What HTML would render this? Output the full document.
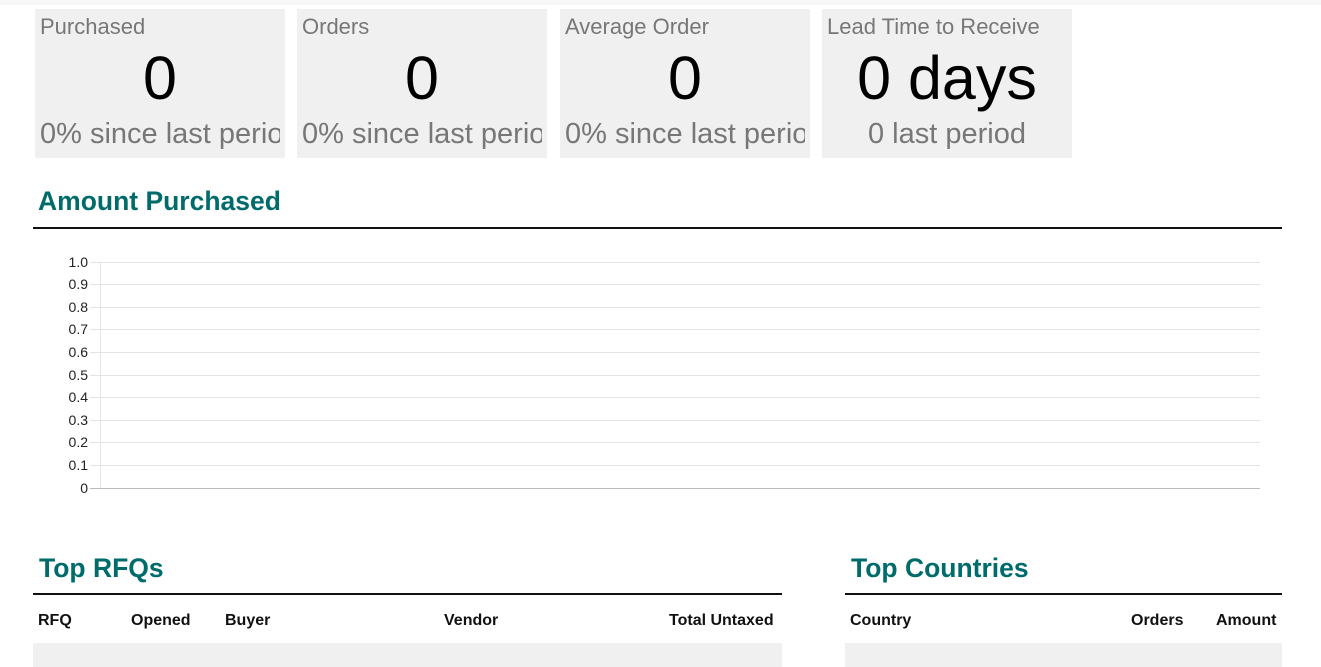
<!DOCTYPE html>
<html><head><meta charset="utf-8"><style>
*{margin:0;padding:0;box-sizing:border-box}
body{width:1321px;height:667px;background:#fff;font-family:"Liberation Sans",Arial,sans-serif;position:relative;overflow:hidden}
.top{position:absolute;left:0;top:0;width:1321px;height:5px;background:#f7f7f7}
.card{position:absolute;top:9px;width:250px;height:149px;background:#f0f0f0;overflow:hidden;text-align:center;white-space:nowrap}
.card .t{position:absolute;left:5px;top:5px;font-size:22px;color:#777;text-align:left}
.card .n{position:absolute;left:0;right:0;top:38px;font-size:61px;color:#000;line-height:62px}
.card .s{position:absolute;left:5px;right:5px;top:108px;font-size:29px;color:#777;overflow:hidden;line-height:34px}
h2{position:absolute;color:#006b6b;font-size:26.5px;font-weight:bold}
.line{position:absolute;height:2px;background:#111}
.yl{position:absolute;width:50px;text-align:right;left:38px;font-size:14px;color:#222}
.g{position:absolute;left:90px;width:1170px;height:1px;background:#e4e4e4}
.th{position:absolute;top:612px;font-size:16px;font-weight:bold;color:#111}
.row{position:absolute;top:643px;height:24px;background:#f0f0f0}
</style></head><body>
<div class="top"></div>
<div class="card" style="left:35px"><div class="t">Purchased</div><div class="n">0</div><div class="s">0% since last period</div></div>
<div class="card" style="left:297px"><div class="t">Orders</div><div class="n">0</div><div class="s">0% since last period</div></div>
<div class="card" style="left:560px"><div class="t">Average Order</div><div class="n">0</div><div class="s">0% since last period</div></div>
<div class="card" style="left:822px"><div class="t">Lead Time to Receive</div><div class="n">0 days</div><div class="s">0 last period</div></div>

<h2 style="left:38px;top:186px">Amount Purchased</h2>
<div class="line" style="left:33px;top:227px;width:1249px"></div>

<div class="g" style="top:262px"></div><div class="yl" style="top:254px">1.0</div>
<div class="g" style="top:284px"></div><div class="yl" style="top:276px">0.9</div>
<div class="g" style="top:307px"></div><div class="yl" style="top:299px">0.8</div>
<div class="g" style="top:329px"></div><div class="yl" style="top:321px">0.7</div>
<div class="g" style="top:352px"></div><div class="yl" style="top:344px">0.6</div>
<div class="g" style="top:375px"></div><div class="yl" style="top:367px">0.5</div>
<div class="g" style="top:397px"></div><div class="yl" style="top:389px">0.4</div>
<div class="g" style="top:420px"></div><div class="yl" style="top:412px">0.3</div>
<div class="g" style="top:442px"></div><div class="yl" style="top:434px">0.2</div>
<div class="g" style="top:465px"></div><div class="yl" style="top:457px">0.1</div>
<div class="g" style="top:488px;background:#bbb"></div><div class="yl" style="top:480px">0</div>
<div style="position:absolute;left:100px;top:262px;width:1px;height:226px;background:#e4e4e4"></div>

<h2 style="left:39px;top:553px">Top RFQs</h2>
<div class="line" style="left:33px;top:593px;width:749px"></div>
<div class="th" style="left:38px">RFQ</div>
<div class="th" style="left:131px">Opened</div>
<div class="th" style="left:225px">Buyer</div>
<div class="th" style="left:444px">Vendor</div>
<div class="th" style="left:669px">Total Untaxed</div>
<div class="row" style="left:33px;width:749px"></div>

<h2 style="left:851px;top:553px">Top Countries</h2>
<div class="line" style="left:845px;top:593px;width:437px"></div>
<div class="th" style="left:850px">Country</div>
<div class="th" style="left:1131px">Orders</div>
<div class="th" style="left:1216px">Amount</div>
<div class="row" style="left:845px;width:437px"></div>
</body></html>
